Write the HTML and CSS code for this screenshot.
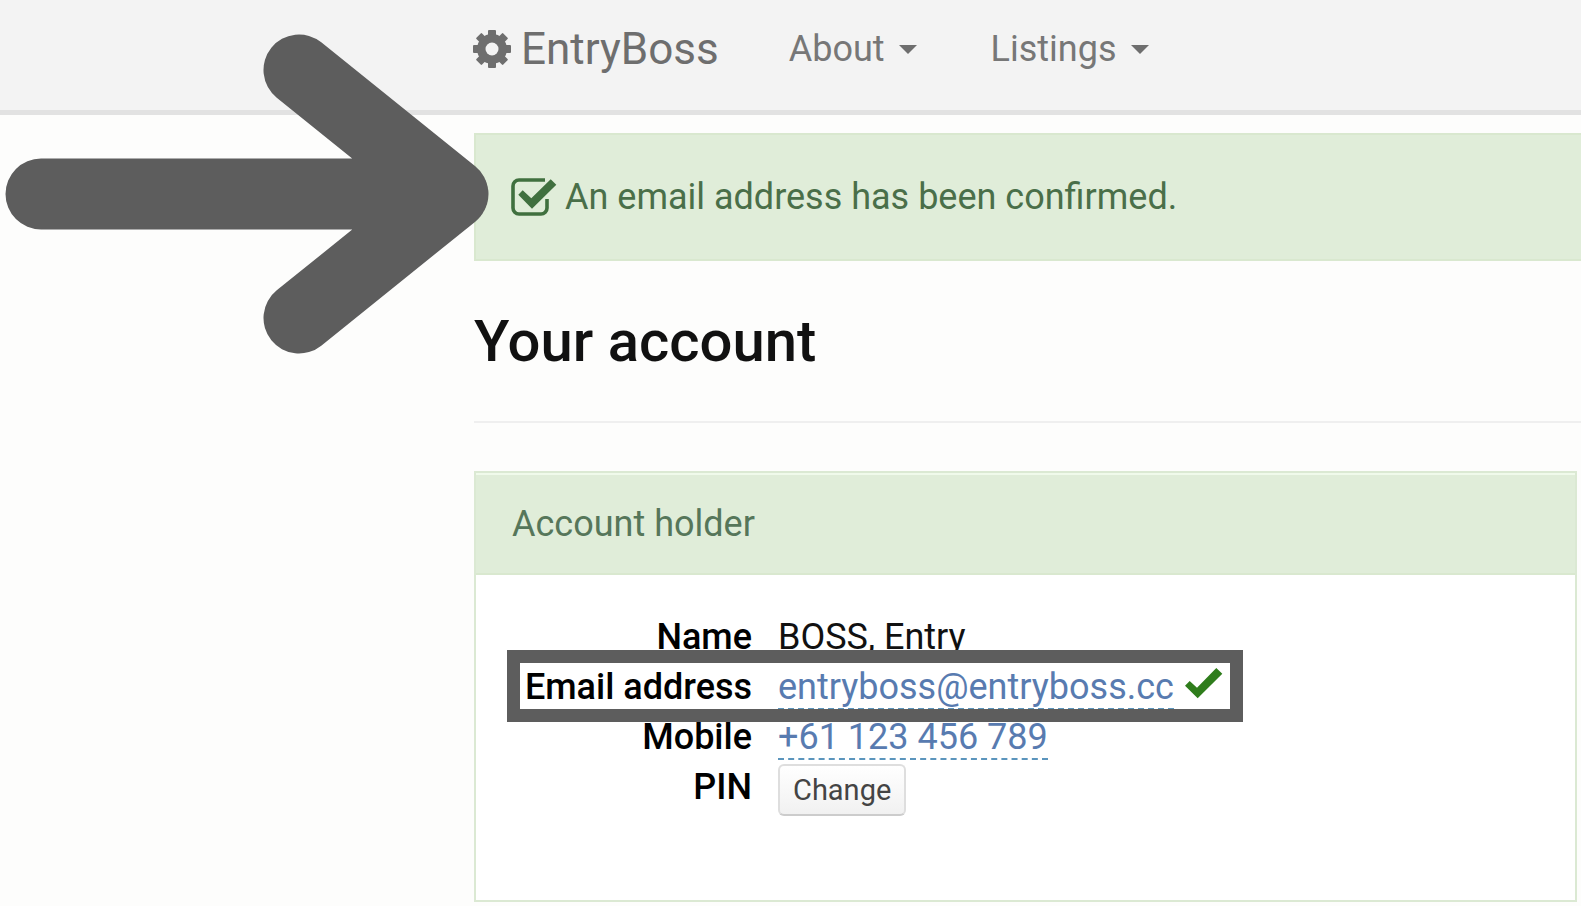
FILE: index.html
```html
<!DOCTYPE html>
<html lang="en">

<head>
    <meta charset="UTF-8">
    <meta name="viewport" content="width=device-width, initial-scale=1.0">
    <title>Your account - EntryBoss</title>
    <link rel="stylesheet" href="styles.css">
</head>

<body>
    <nav class="navbar">
        <a class="brand" href="#">
            <svg class="icon-cog" viewBox="0 0 40 40" aria-hidden="true">
                <g fill="currentColor">
                    <rect x="16" y="1" width="8" height="38" rx="1" />
                    <rect x="16" y="1" width="8" height="38" rx="1" transform="rotate(45 20 20)" />
                    <rect x="16" y="1" width="8" height="38" rx="1" transform="rotate(90 20 20)" />
                    <rect x="16" y="1" width="8" height="38" rx="1" transform="rotate(135 20 20)" />
                    <circle cx="20" cy="20" r="15" />
                </g>
                <circle cx="20" cy="20" r="6.5" fill="#f3f3f3" />
            </svg>
            EntryBoss
        </a>
        <ul class="nav">
            <li><a class="nav-link" href="#">About <span class="caret"></span></a></li>
            <li><a class="nav-link" href="#">Listings <span class="caret"></span></a></li>
        </ul>
    </nav>

    <main class="content">
        <div class="alert" role="status">
            <svg class="icon-checked" viewBox="0 0 47 40" aria-hidden="true">
                <path d="M35 3H9a6 6 0 0 0-6 6v22a6 6 0 0 0 6 6h22a6 6 0 0 0 6-6V22" fill="none" stroke="currentColor" stroke-width="3.6" />
                <path d="M8.3 17.7l4.4-4.4 8.6 8L40.7 2.3l5.6 5.4L22 31.7z" fill="currentColor" />
            </svg>
            An email address has been confirmed.
        </div>

        <h1 class="page-title">Your account</h1>

        <section class="panel">
            <h2 class="panel-heading">Account holder</h2>
            <dl class="details">
                <div class="row">
                    <dt>Name</dt>
                    <dd>BOSS, Entry</dd>
                </div>
                <div class="row highlight">
                    <dt>Email address</dt>
                    <dd>
                        <a class="editable" href="#">entryboss@entryboss.cc</a>
                        <svg class="icon-ok" viewBox="0 0 38 31" aria-label="Confirmed">
                            <path d="M0 17.7L4.7 13l7.3 6.7L31.3 0l6 5.7-24.6 24.6z" fill="currentColor" />
                        </svg>
                    </dd>
                </div>
                <div class="row">
                    <dt>Mobile</dt>
                    <dd><a class="editable" href="#">+61 123 456 789</a></dd>
                </div>
                <div class="row">
                    <dt>PIN</dt>
                    <dd><button type="button" class="btn">Change</button></dd>
                </div>
            </dl>
        </section>
    </main>

    <!-- arrow pointing at the message -->
    <svg class="arrow" viewBox="0 0 484 320" aria-hidden="true">
        <path d="M36 160H448M294 36L448 160L294 284" />
    </svg>
</body>

</html>
```

FILE: styles.css
```css
*,
*::after {
    box-sizing: border-box;
}

body {
    margin: 0;
    position: relative;
    background: #fdfdfc;
    color: #111;
    font-family: Roboto, "Liberation Sans", sans-serif;
    font-size: 36px;
    line-height: 50px;
}

a {
    text-decoration: none;
}

/* navbar */
.navbar {
    display: flex;
    align-items: center;
    height: 115px;
    padding: 0 0 12px 472px;
    background: #f3f3f3;
    border-bottom: 5px solid #e2e2e2;
}

.brand {
    display: flex;
    align-items: center;
    gap: 9px;
    color: #6e6e6e;
    font-size: 44px;
}

.icon-cog {
    width: 40px;
    height: 40px;
}

.nav {
    display: flex;
    gap: 74px;
    margin: 0 0 0 70px;
    padding: 0;
    list-style: none;
}

.nav-link {
    display: flex;
    align-items: center;
    gap: 14px;
    color: #777;
}

.caret {
    border-top: 9px solid #6e6e6e;
    border-left: 9px solid transparent;
    border-right: 9px solid transparent;
}

.content {
    padding: 18px 0 0 474px;
}

/* message */
.alert {
    display: flex;
    align-items: center;
    gap: 8px;
    padding: 37px 34px;
    border: 2px solid #d9e8cf;
    border-right: none;
    background: #e0edd9;
    color: #4a6f49;
}

.icon-checked {
    width: 47px;
    height: 40px;
    color: #40703f;
}

.page-title {
    margin: 0 0 48px;
    padding: 45px 0;
    border-bottom: 2px solid #efefef;
    font-size: 58px;
    font-weight: 500;
    line-height: 70px;
}

/* account panel */
.panel {
    margin-right: 4px;
    border: 2px solid #dbe9d3;
    background: #fff;
}

.panel-heading {
    margin: 0;
    padding: 24px 36px;
    border-top: 2px solid #f0faeb;
    border-bottom: 2px solid #d9e8cf;
    background: #e0edd9;
    color: #56765a;
    font-size: 36px;
    font-weight: 400;
}

.details {
    margin: 0;
    padding: 37px 36px 84px;
}

.row {
    display: grid;
    grid-template-columns: 240px 1fr;
    gap: 26px;
    position: relative;
}

.row dt {
    color: #000;
    font-weight: 500;
    text-align: right;
}

.row dd {
    margin: 0;
}

/* frame round the email row */
.highlight::after {
    content: "";
    position: absolute;
    top: -12px;
    left: -5px;
    width: 736px;
    height: 72px;
    border: 13px solid #5d5d5d;
    z-index: 1;
}

.editable {
    border-bottom: 2px dashed #5b95bd;
    color: #587bb0;
}

.icon-ok {
    width: 38px;
    height: 31px;
    margin-left: 2px;
    color: #2f7d1c;
}

.btn {
    display: block;
    margin-top: 2px;
    padding: 0 13px;
    height: 52px;
    border: 2px solid #dedede;
    border-bottom-color: #ccc;
    border-radius: 6px;
    background: linear-gradient(#fff, #f1f1f1);
    color: #444;
    font-family: inherit;
    font-size: 29px;
    cursor: pointer;
}

.arrow {
    position: absolute;
    top: 34px;
    left: 5px;
    width: 484px;
    height: 320px;
    fill: none;
    stroke: #5d5d5d;
    stroke-width: 71;
    stroke-linecap: round;
    stroke-linejoin: round;
    pointer-events: none;
}
```
